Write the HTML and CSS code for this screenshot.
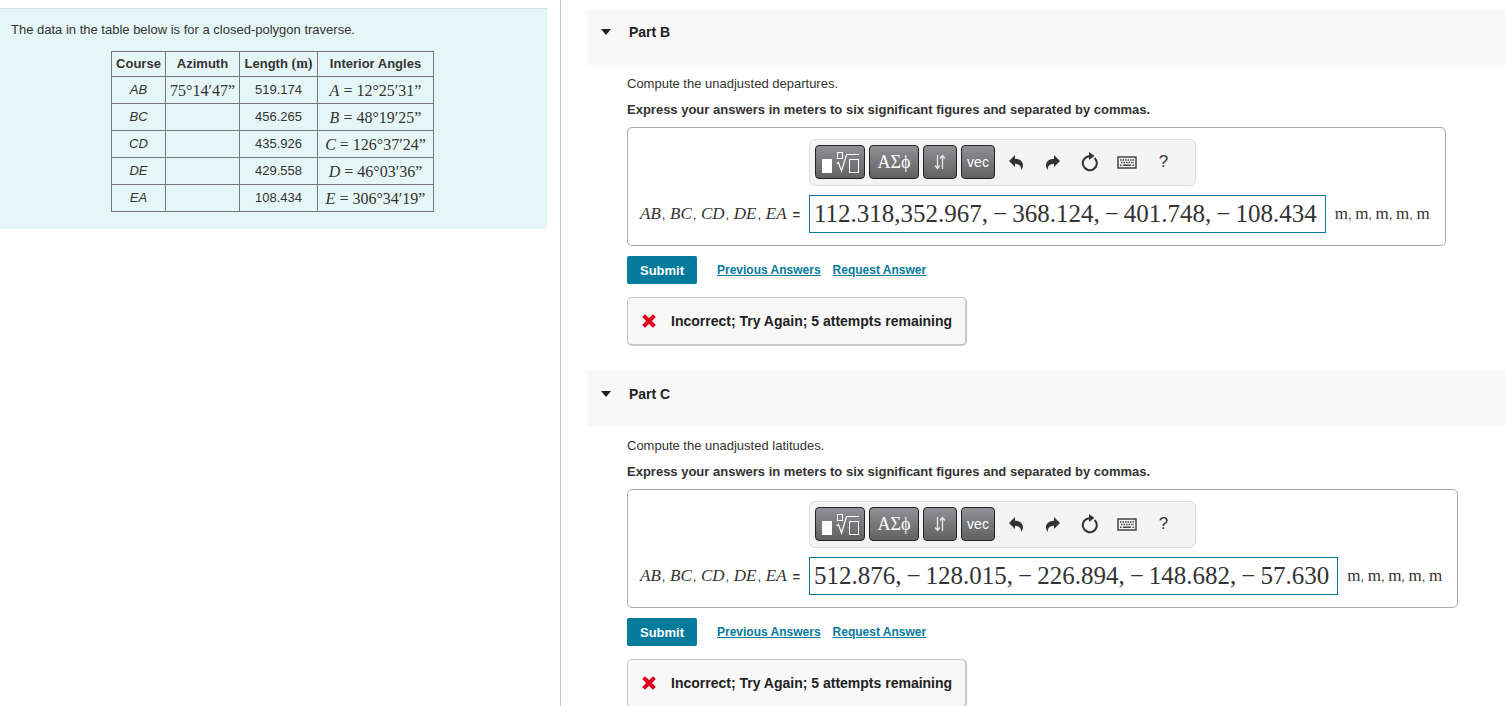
FILE: index.html
```html
<!DOCTYPE html>
<html lang="en">
<head>
<meta charset="utf-8">
<title>Closed-polygon traverse</title>
<link rel="stylesheet" href="styles.css">
</head>
<body>
<svg class="sprite" aria-hidden="true">
  <symbol id="i-root" viewBox="0 0 40 24">
    <rect x="2" y="9" width="10" height="14" fill="#fff"/>
    <g fill="none" stroke="#fff">
      <rect x="17.500" y="2.500" width="5" height="6"/>
      <path d="M16.500 13.500l2-1 3 8.500 5-16.500h12.500" stroke-width="1.200"/>
      <rect x="29.500" y="9.500" width="9" height="13"/>
    </g>
  </symbol>
  <symbol id="i-updown" viewBox="0 0 16 18">
    <g fill="none" stroke="#e8e8e8" stroke-width="1.300"><path d="M5.500 2v13M3 12.500l2.500 3 2.500-3M10.500 16V3M8 5.500l2.500-3 2.500 3"/></g>
  </symbol>
  <symbol id="i-undo" viewBox="0 0 14 15">
    <path fill="#333" d="M0 6L6 0v3.700c5 0 8 3 8 6.500 0 2-.8 3.500-2 4.800.6-4-1.500-6-6-6.200V12z"/>
  </symbol>
  <symbol id="i-reset" viewBox="0 0 18 20">
    <path fill="none" stroke="#333" stroke-width="2" d="M13.500 6A7 7 0 1 1 8.500 4.200"/>
    <path fill="#333" d="M8 0l5.500 4L8 8z"/>
  </symbol>
  <symbol id="i-keys" viewBox="0 0 20 13">
    <rect x="1" y="1" width="18" height="11" fill="#f4f4f4" stroke="#444" stroke-width="1.500"/>
    <path stroke="#444" stroke-width="1.500" stroke-dasharray="1.500 1" d="M3 4h14M4 6.500h13"/>
    <path stroke="#444" stroke-width="1.500" d="M3 9.200h1.500M6 9.200h8M15.500 9.200h1.500"/>
  </symbol>
  <symbol id="i-cross" viewBox="0 0 14 14">
    <path d="M3 3l8 8M11 3l-8 8" stroke="#e0001b" stroke-width="4" stroke-linecap="square"/>
  </symbol>
</svg>
<div class="page">
  <aside class="side">
    <div class="problem">
      <p class="intro">The data in the table below is for a closed-polygon traverse.</p>
      <table class="data">
        <thead><tr><th class="c-course">Course</th><th class="c-azimuth">Azimuth</th><th class="c-length">Length <span class="math-unit">(m)</span></th><th class="c-angle">Interior Angles</th></tr></thead>
        <tbody>
          <tr><td><i>AB</i></td><td class="math">75°14′47”</td><td>519.174</td><td class="math"><i>A</i> = 12°25′31”</td></tr>
          <tr><td><i>BC</i></td><td></td><td>456.265</td><td class="math"><i>B</i> = 48°19′25”</td></tr>
          <tr><td><i>CD</i></td><td></td><td>435.926</td><td class="math"><i>C</i> = 126°37′24”</td></tr>
          <tr><td><i>DE</i></td><td></td><td>429.558</td><td class="math"><i>D</i> = 46°03′36”</td></tr>
          <tr><td><i>EA</i></td><td></td><td>108.434</td><td class="math"><i>E</i> = 306°34′19”</td></tr>
        </tbody>
      </table>
    </div>
  </aside>
  <main class="parts">
    <section class="part">
      <h2 class="part-head"><button class="toggle" type="button" aria-expanded="true"><span class="caret"></span>Part B</button></h2>
      <div class="part-body">
        <p class="ask">Compute the unadjusted departures.</p>
        <p class="hint">Express your answers in meters to six significant figures and separated by commas.</p>
        <div class="answer">
          <div class="tools">
            <button class="key wide" type="button" aria-label="Templates"><svg class="ic-root"><use href="#i-root"/></svg></button>
            <button class="key wide greek" type="button">ΑΣϕ</button>
            <button class="key" type="button" aria-label="Arrows"><svg class="ic-updown"><use href="#i-updown"/></svg></button>
            <button class="key" type="button">vec</button>
            <button class="tool" type="button" aria-label="Undo"><svg class="ic-undo"><use href="#i-undo"/></svg></button>
            <button class="tool" type="button" aria-label="Redo"><svg class="ic-undo flip"><use href="#i-undo"/></svg></button>
            <button class="tool" type="button" aria-label="Reset"><svg class="ic-reset"><use href="#i-reset"/></svg></button>
            <button class="tool" type="button" aria-label="Keyboard"><svg class="ic-keys"><use href="#i-keys"/></svg></button>
            <button class="tool" type="button">?</button>
          </div>
          <label class="vars" for="departures"><i>AB</i><span class="sep">, </span><i>BC</i><span class="sep">, </span><i>CD</i><span class="sep">, </span><i>DE</i><span class="sep">, </span><i>EA</i><span class="equals">=</span></label>
          <input class="entry" id="departures" type="text" value="112.318,352.967,&#8201;−&#8201;368.124,&#8201;−&#8201;401.748,&#8201;−&#8201;108.434">
          <span class="units">m<span class="sep">, </span>m<span class="sep">, </span>m<span class="sep">, </span>m<span class="sep">, </span>m</span>
        </div>
        <div class="actions"><button class="submit" type="button">Submit</button><a href="#previous">Previous Answers</a><a href="#request">Request Answer</a></div>
        <div class="result"><svg class="ic-cross"><use href="#i-cross"/></svg>Incorrect; Try Again; 5 attempts remaining</div>
      </div>
    </section>
    <section class="part">
      <h2 class="part-head"><button class="toggle" type="button" aria-expanded="true"><span class="caret"></span>Part C</button></h2>
      <div class="part-body">
        <p class="ask">Compute the unadjusted latitudes.</p>
        <p class="hint">Express your answers in meters to six significant figures and separated by commas.</p>
        <div class="answer">
          <div class="tools">
            <button class="key wide" type="button" aria-label="Templates"><svg class="ic-root"><use href="#i-root"/></svg></button>
            <button class="key wide greek" type="button">ΑΣϕ</button>
            <button class="key" type="button" aria-label="Arrows"><svg class="ic-updown"><use href="#i-updown"/></svg></button>
            <button class="key" type="button">vec</button>
            <button class="tool" type="button" aria-label="Undo"><svg class="ic-undo"><use href="#i-undo"/></svg></button>
            <button class="tool" type="button" aria-label="Redo"><svg class="ic-undo flip"><use href="#i-undo"/></svg></button>
            <button class="tool" type="button" aria-label="Reset"><svg class="ic-reset"><use href="#i-reset"/></svg></button>
            <button class="tool" type="button" aria-label="Keyboard"><svg class="ic-keys"><use href="#i-keys"/></svg></button>
            <button class="tool" type="button">?</button>
          </div>
          <label class="vars" for="latitudes"><i>AB</i><span class="sep">, </span><i>BC</i><span class="sep">, </span><i>CD</i><span class="sep">, </span><i>DE</i><span class="sep">, </span><i>EA</i><span class="equals">=</span></label>
          <input class="entry" id="latitudes" type="text" value="512.876,&#8201;−&#8201;128.015,&#8201;−&#8201;226.894,&#8201;−&#8201;148.682,&#8201;−&#8201;57.630">
          <span class="units">m<span class="sep">, </span>m<span class="sep">, </span>m<span class="sep">, </span>m<span class="sep">, </span>m</span>
        </div>
        <div class="actions"><button class="submit" type="button">Submit</button><a href="#previous">Previous Answers</a><a href="#request">Request Answer</a></div>
        <div class="result"><svg class="ic-cross"><use href="#i-cross"/></svg>Incorrect; Try Again; 5 attempts remaining</div>
      </div>
    </section>
  </main>
</div>
</body>
</html>
```
FILE: styles.css
```css
* { box-sizing: border-box; }
html, body { height: 100%; }
body {
  margin: 0;
  overflow: hidden;
  background: #fff;
  color: #333;
  font: 13px/18px "Liberation Sans", Arial, sans-serif;
}
p, h2 { margin: 0; }
button { font-family: inherit; border: 0; padding: 0; cursor: pointer; }
svg { display: block; flex: none; }
.sprite { position: absolute; width: 0; height: 0; }
.page {
  display: grid;
  grid-template-columns: minmax(0, 561fr) minmax(0, 944fr);
  height: 100vh;
}

/* Problem statement */
.side { padding: 8px 13px 0 0; border-right: 1px solid #b3c8d8; }
.problem {
  padding: 12px 13px 17px 11px;
  border-top: 1px solid #d9dede;
  background: #e6f6f6;
}
.data {
  margin: 12px auto 0;
  border-collapse: collapse;
  text-align: center;
}
.data th, .data td { border: 1px solid #777; padding: 0 4px; height: 27px; }
.data th { height: 25px; }
.data td { padding-bottom: 1px; }
.data .math { padding: 1px 0 0; }
.c-course { width: 54px; }
.c-azimuth { width: 74px; }
.c-length { width: 78px; white-space: nowrap; }
.c-angle { width: 116px; }
.math { font: 16px/18px "Liberation Serif", "Times New Roman", serif; }
.math-unit { font: bold 14px/16px "Liberation Serif", "Times New Roman", serif; }

/* Parts */
.parts { padding: 9px 0 0 26px; overflow: hidden; }
.part-head { height: 56px; padding: 12px 14px; background: #f8f8f8; }
.toggle {
  display: flex;
  align-items: center;
  gap: 18px;
  background: none;
  color: #222;
  font-size: 14px;
  font-weight: bold;
  line-height: 22px;
}
.caret {
  border: 5px solid transparent;
  border-top: 6px solid #222;
  border-bottom: 0;
}
.part-body { padding: 9px 8px 25px 40px; }
.ask { line-height: 20px; }
.hint { margin-top: 6px; font-weight: bold; line-height: 20px; }

/* Answer box */
.answer {
  display: grid;
  grid-template-columns: 160px max-content max-content;
  column-gap: 9px;
  row-gap: 9px;
  align-items: center;
  width: max-content;
  margin-top: 7px;
  padding: 11px 15px 12px 12px;
  border: 1px solid #a9a9a9;
  border-radius: 5px;
}
.tools {
  grid-column: 2 / 4;
  display: flex;
  gap: 4px;
  justify-self: start;
  width: 387px;
  height: 47px;
  padding: 5px;
  border: 1px solid #ddd;
  border-radius: 6px;
  background: #f4f4f4;
}
.key {
  display: grid;
  place-items: center;
  width: 34px;
  height: 34px;
  border: 1px solid #222;
  border-radius: 4px;
  background: linear-gradient(#8f8f95, #626262);
  color: #fff;
  font-size: 14px;
}
.wide { width: 50px; }
.greek { font: 18px/22px "Liberation Serif", "Times New Roman", serif; }
.tool {
  display: grid;
  place-items: center;
  width: 33px;
  height: 34px;
  background: none;
  color: #333;
  font-size: 17px;
}
.ic-root { width: 40px; height: 24px; }
.ic-updown { width: 16px; height: 18px; }
.ic-undo { width: 14px; height: 15px; }
.flip { transform: scaleX(-1); }
.ic-reset { width: 18px; height: 20px; }
.ic-keys { width: 20px; height: 13px; }
.ic-cross { width: 14px; height: 14px; }
.vars {
  grid-column: 1;
  display: flex;
  align-items: baseline;
  gap: 1px;
  white-space: pre;
  font: 17px/20px "Liberation Serif", "Times New Roman", serif;
}
.sep { font: 13px/20px "Liberation Sans", Arial, sans-serif; }
.equals { margin-left: auto; font: bold 13px/20px "Liberation Sans", Arial, sans-serif; }
.entry {
  field-sizing: content;
  height: 38px;
  padding: 0 8px 0 4px;
  border: 1px solid #047a9c;
  border-radius: 0;
  color: #333;
  font: 25px/30px "Liberation Serif", "Times New Roman", serif;
}
.units { font: 17px/20px "Liberation Serif", "Times New Roman", serif; }

/* Submit row and feedback */
.actions { display: flex; align-items: center; gap: 12px; margin-top: 10px; }
.submit {
  width: 70px;
  height: 28px;
  margin-right: 8px;
  border-radius: 2px;
  background: #047a9c;
  color: #fff;
  font-size: 13px;
  font-weight: bold;
}
.actions a { color: #047a9c; font-size: 12px; font-weight: bold; }
.result {
  display: flex;
  align-items: center;
  gap: 15px;
  width: max-content;
  height: 49px;
  margin-top: 13px;
  padding: 0 13px 0 14px;
  border: 1px solid #c8c8c8;
  border-right-width: 2px;
  border-bottom-width: 2px;
  border-radius: 5px;
  background: #f8f8f8;
  color: #222;
  font-size: 14px;
  font-weight: bold;
}
```
